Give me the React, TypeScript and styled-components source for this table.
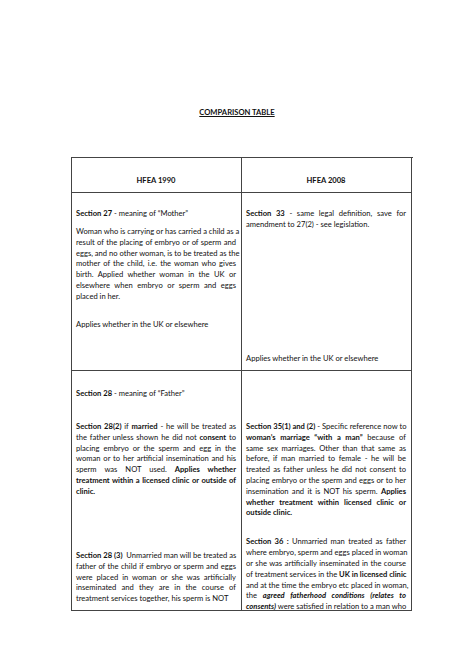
import React from "react";
import styled, { createGlobalStyle } from "styled-components";

const Global = createGlobalStyle`
  html, body { margin: 0; padding: 0; background: #ffffff; }
  body { width: 474px; height: 669px; overflow: hidden; }
`;

const Page = styled.div`
  width: 474px;
  height: 669px;
  box-sizing: border-box;
  padding-top: 107px;
  background: #ffffff;
  color: #111111;
  font-family: Lato, "Open Sans", "Liberation Sans", sans-serif;
  font-size: 7.6px;
  line-height: 10.8px;
`;

const Title = styled.h1`
  margin: 0;
  font-size: 7.6px;
  line-height: 10.8px;
  font-weight: 700;
  text-align: center;
  text-decoration: underline;
  text-underline-offset: 1px;
`;

const Table = styled.div`
  display: grid;
  grid-template-columns: 170px 170px;
  grid-template-rows: 35px 178px 240px;
  margin: 39px 0 0 71px;
  width: 341px;
  border-top: 1px solid #444;
  border-left: 1px solid #444;
`;

const Cell = styled.div<{ $head?: boolean }>`
  box-sizing: border-box;
  border-right: 1px solid #444;
  border-bottom: 1px solid #444;
  padding: ${(p) => (p.$head ? "17.3px 5px 0 4px" : "0 5px 0 4px")};
  text-align: ${(p) => (p.$head ? "center" : "left")};
  font-weight: ${(p) => (p.$head ? 700 : 400)};
  overflow: hidden;
`;

const Para = styled.div<{ $mt: number }>`
  margin-top: ${(p) => p.$mt}px;
`;

const Line = styled.span<{ $last?: boolean }>`
  display: block;
  white-space: nowrap;
  text-align: justify;
  text-align-last: ${(p) => (p.$last ? "left" : "justify")};
`;

const B = styled.b`
  font-weight: 700;
`;

const BI = styled.b`
  font-weight: 700;
  font-style: italic;
`;

type Seg = React.ReactNode;

const Justified: React.FC<{ mt: number; lines: Seg[] }> = ({ mt, lines }) => (
  <Para $mt={mt}>
    {lines.map((l, i) => (
      <Line key={i} $last={i === lines.length - 1}>
        {l}
      </Line>
    ))}
  </Para>
);

export default function App() {
  return (
    <>
      <Global />
      <Page>
        <Title>COMPARISON TABLE</Title>
        <Table>
          <Cell $head>HFEA 1990</Cell>
          <Cell $head>HFEA 2008</Cell>

          <Cell>
            <Para $mt={15.6}>
              <B>Section 27</B> - meaning of “Mother”
            </Para>
            <Justified
              mt={6.9}
              lines={[
                "Woman who is carrying or has carried a child as a",
                "result of the placing of embryo or of sperm and",
                "eggs, and no other woman, is to be treated as the",
                "mother of the child, i.e. the woman who gives",
                "birth. Applied whether woman in the UK or",
                "elsewhere when embryo or sperm and eggs",
                "placed in her.",
              ]}
            />
            <Para $mt={17.5}>Applies whether in the UK or elsewhere</Para>
          </Cell>
          <Cell>
            <Justified
              mt={15.6}
              lines={[
                <>
                  <B>Section 33</B> - same legal definition, save for
                </>,
                "amendment to 27(2) - see legislation.",
              ]}
            />
            <Para $mt={122.7}>Applies whether in the UK or elsewhere</Para>
          </Cell>

          <Cell>
            <Para $mt={16.9}>
              <B>Section 28</B> - meaning of “Father”
            </Para>
            <Justified
              mt={22.6}
              lines={[
                <>
                  <B>Section 28(2)</B> if <B>married</B> - he will be treated as
                </>,
                <>
                  the father unless shown he did not <B>consent</B> to
                </>,
                "placing embryo or the sperm and egg in the",
                "woman or to her artificial insemination and his",
                <>
                  sperm was NOT used. <B>Applies whether</B>
                </>,
                <B>treatment within a licensed clinic or outside of</B>,
                <B>clinic.</B>,
              ]}
            />
            <Justified
              mt={53.4}
              lines={[
                <>
                  <B>Section 28 (3)</B>&nbsp; Unmarried man will be treated as
                </>,
                "father of the child if embryo or sperm and eggs",
                "were placed in woman or she was artificially",
                "inseminated and they are in the course of",
                "treatment services together, his sperm is NOT",
              ]}
            />
          </Cell>
          <Cell>
            <Justified
              mt={50.3}
              lines={[
                <>
                  <B>Section 35(1) and (2)</B> - Specific reference now to
                </>,
                <>
                  <B>woman’s marriage “with a man”</B> because of
                </>,
                "same sex marriages. Other than that same as",
                "before, if man married to female - he will be",
                "treated as father unless he did not consent to",
                "placing embryo or the sperm and eggs or to her",
                <>
                  insemination and it is NOT his sperm. <B>Applies</B>
                </>,
                <B>whether treatment within licensed clinic or</B>,
                <B>outside clinic.</B>,
              ]}
            />
            <Justified
              mt={18.1}
              lines={[
                <>
                  <B>Section 36 :</B> Unmarried man treated as father
                </>,
                "where embryo, sperm and eggs placed in woman",
                "or she was artificially inseminated in the course",
                <>
                  of treatment services in the <B>UK in licensed clinic</B>
                </>,
                "and at the time the embryo etc placed in woman,",
                <>
                  the <BI>agreed fatherhood conditions (relates to</BI>
                </>,
                <>
                  <BI>consents)</BI> were satisfied in relation to a man who
                </>,
              ]}
            />
          </Cell>
        </Table>
      </Page>
    </>
  );
}
